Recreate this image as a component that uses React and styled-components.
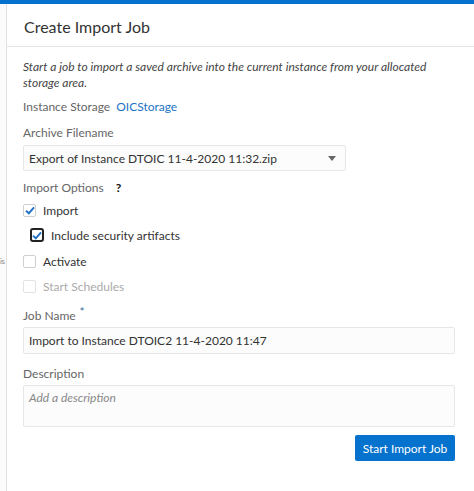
import React from 'react'
import styled, { createGlobalStyle } from 'styled-components'

const Global = createGlobalStyle`
  html, body { margin: 0; padding: 0; background: #fff; }
  body {
    font-family: Lato, "Open Sans", sans-serif;
    color: #333;
    width: 474px;
    height: 491px;
    overflow: hidden;
  }
  * { box-sizing: border-box; }
`

const Page = styled.div`
  display: flex;
  flex-direction: column;
  height: 491px;
`

const TopBar = styled.div`
  height: 4px;
  background: #0572ce;
  flex-shrink: 0;
`

const Stage = styled.div`
  display: flex;
  flex: 1;
  background: #fbfbfb;
`

const Gutter = styled.div`
  width: 6px;
  padding-top: 252px;
  font-size: 8px;
  letter-spacing: -0.5px;
  color: #888;
  white-space: nowrap;
`

const Panel = styled.section`
  flex: 1;
  background: #fff;
  border-left: 1px solid #e2e2e2;
  display: flex;
  flex-direction: column;
`

const Header = styled.header`
  height: 43px;
  border-bottom: 1px solid #e4e4e4;
  display: flex;
  align-items: center;
  padding: 3px 17px 0;
`

const Title = styled.h1`
  margin: 0;
  font-size: 16px;
  font-weight: 400;
  color: #333;
`

const Body = styled.div`
  padding: 12px 19px 0 16px;
  display: flex;
  flex-direction: column;
`

const Intro = styled.p`
  margin: 0;
  font-size: 12px;
  font-style: italic;
  line-height: 16px;
  color: #444;
  max-width: 410px;
`

const Line = styled.div`
  margin-top: ${p => p.$top || 0}px;
  font-size: 12px;
  line-height: 16px;
  color: #666;
  display: flex;
  align-items: center;
`

const Link = styled.a`
  color: #1b73c5;
  text-decoration: none;
  margin-left: 6px;
`

const Help = styled.span`
  color: #111;
  font-weight: 700;
  margin-left: 12px;
`

const Star = styled.span`
  color: #3a6ea5;
  margin-left: 4px;
  position: relative;
  top: -4px;
`

const Field = styled.div`
  margin-top: ${p => p.$top || 4}px;
  width: ${p => p.$width || '100%'};
  height: ${p => p.$height || 26}px;
  background: #fcfcfc;
  border: 1px solid #e6e6e6;
  border-radius: 2px;
  display: flex;
  align-items: ${p => (p.$multi ? 'flex-start' : 'center')};
  justify-content: space-between;
  padding: ${p => (p.$multi ? '4px 5px' : '0 9px 0 5px')};
  font-size: 12px;
  color: ${p => (p.$placeholder ? '#888' : '#333')};
  font-style: ${p => (p.$placeholder ? 'italic' : 'normal')};
`

const Caret = styled.span`
  width: 0;
  height: 0;
  border-left: 4px solid transparent;
  border-right: 4px solid transparent;
  border-top: 5px solid #666;
`

const Option = styled.label`
  margin-top: ${p => p.$top || 0}px;
  margin-left: ${p => p.$indent || 0}px;
  display: flex;
  align-items: center;
  gap: 7px;
  font-size: 12px;
  height: 16px;
  color: ${p => (p.$disabled ? '#aaa' : '#333')};
`

const Box = styled.span`
  width: ${p => (p.$focus ? 14 : 13)}px;
  height: ${p => (p.$focus ? 14 : 13)}px;
  border: ${p => (p.$focus ? '2px solid #222' : '1px solid #cfcfcf')};
  border-radius: ${p => (p.$focus ? 3 : 2)}px;
  background: #fff;
  display: flex;
  align-items: center;
  justify-content: center;
  flex-shrink: 0;
  opacity: ${p => (p.$disabled ? 0.6 : 1)};
`

const Actions = styled.div`
  margin-top: 8px;
  display: flex;
  justify-content: flex-end;
`

const Button = styled.button`
  height: 26px;
  width: 100px;
  padding: 0;
  background: #0572ce;
  border: none;
  border-radius: 2px;
  color: #fff;
  font-family: inherit;
  font-size: 12px;
  white-space: nowrap;
`

const Check = () => (
  <svg width="10" height="9" viewBox="0 0 10 9">
    <path d="M1 4.6 L3.8 7.3 L9 1.3" fill="none" stroke="#1d6fc4" strokeWidth="1.9" />
  </svg>
)

const CheckOption = ({ label, checked, focus, disabled, top, indent }) => (
  <Option $top={top} $indent={indent} $disabled={disabled}>
    <Box $focus={focus} $disabled={disabled}>{checked && <Check />}</Box>
    {label}
  </Option>
)

export default function App() {
  return (
    <Page>
      <Global />
      <TopBar />
      <Stage>
        <Gutter>is</Gutter>
        <Panel>
          <Header>
            <Title>Create Import Job</Title>
          </Header>
          <Body>
            <Intro>
              Start a job to import a saved archive into the current instance from your allocated storage area.
            </Intro>
            <Line $top={8}>
              Instance Storage<Link href="#">OICStorage</Link>
            </Line>
            <Line $top={10}>Archive Filename</Line>
            <Field $top={4} $width="323px" $height={26}>
              Export of Instance DTOIC 11-4-2020 11:32.zip
              <Caret />
            </Field>
            <Line $top={9}>
              Import Options<Help>?</Help>
            </Line>
            <CheckOption top={6} label="Import" checked />
            <CheckOption top={9} indent={7} label="Include security artifacts" checked focus />
            <CheckOption top={10} label="Activate" />
            <CheckOption top={9} label="Start Schedules" disabled />
            <Line $top={14}>
              Job Name<Star>*</Star>
            </Line>
            <Field $top={3} $height={27}>Import to Instance DTOIC2 11-4-2020 11:47</Field>
            <Line $top={12}>Description</Line>
            <Field $top={3} $height={42} $multi $placeholder>Add a description</Field>
            <Actions>
              <Button>Start Import Job</Button>
            </Actions>
          </Body>
        </Panel>
      </Stage>
    </Page>
  )
}
